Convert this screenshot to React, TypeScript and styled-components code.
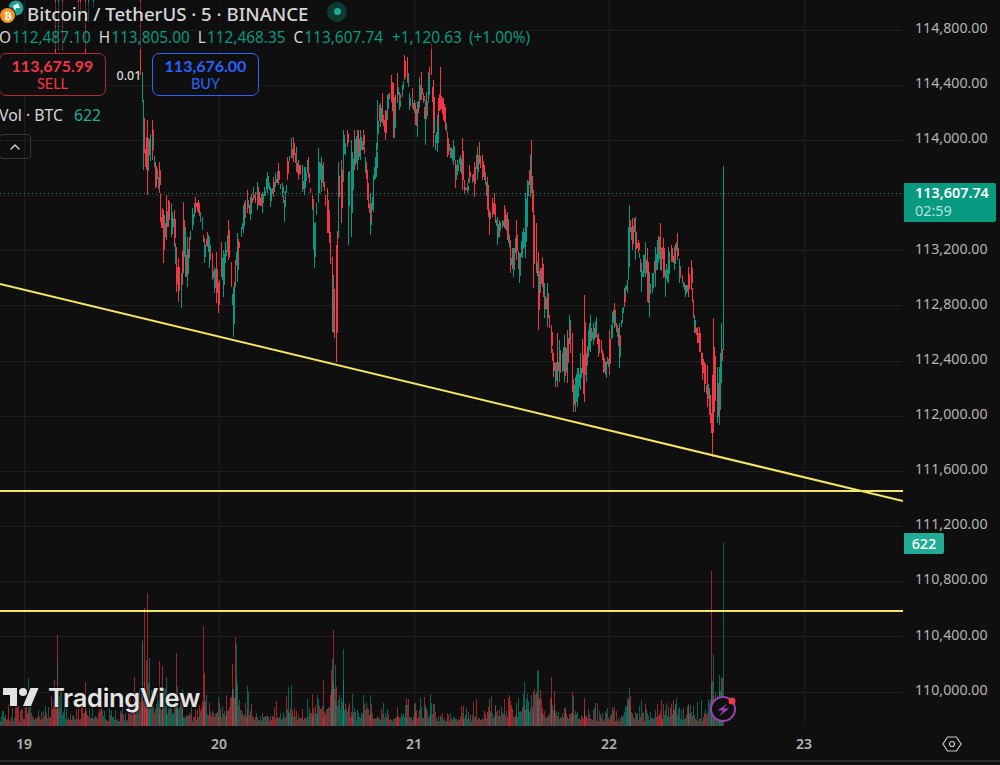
import { ChevronUp } from "lucide-react";
import { FaBtc } from "react-icons/fa";
import styled, { createGlobalStyle } from "styled-components";

const UP = "#089981";
const DOWN = "#f23645";
const FONT = `"Noto Sans", "Open Sans", sans-serif`;

const GlobalStyle = createGlobalStyle`
  html, body {
    margin: 0;
    height: 100%;
    background: #0f0f0f;
  }
  body {
    font-family: ${FONT};
    overflow: hidden;
  }
`;

// [x, top, bottom] read off 3x crops of the chart
type Row = number[];
const fromCrop = (ox: number, oy: number, rows: Row[]) =>
  rows.map(([x, a, b]) => [ox + x / 3, oy + a / 3, oy + b / 3]);

const PRICE_TRACE: Row[] = [
  ...fromCrop(130, 130, [
    [40, -90, 120], [52, -30, 195], [65, -30, 90], [75, 95, 175], [88, 95, 190], [90, 190, 275],
    [100, 240, 400], [108, 195, 330], [115, 210, 290], [122, 220, 320], [132, 240, 350],
    [138, 350, 485], [145, 385, 515], [152, 430, 535], [158, 215, 430], [165, 290, 440],
    [172, 320, 470], [178, 320, 385], [185, 235, 300], [195, 200, 250], [205, 210, 250],
    [215, 260, 300], [222, 325, 400], [230, 305, 350], [238, 320, 415], [245, 370, 450],
    [252, 410, 490], [258, 365, 520], [265, 455, 550], [272, 335, 440], [280, 360, 500],
    [285, 335, 400], [295, 270, 390], [302, 395, 470], [308, 470, 620], [315, 390, 470],
    [322, 310, 455], [332, 290, 320], [340, 225, 310], [350, 180, 250], [360, 200, 270],
    [370, 170, 210], [380, 155, 240], [395, 185, 250], [410, 125, 190], [420, 170, 230],
    [430, 140, 200], [445, 100, 165], [455, 160, 200], [462, 210, 275], [472, 80, 150],
    [482, 25, 85], [490, 20, 95], [498, 50, 125], [505, 90, 150], [515, 105, 185],
    [522, 110, 195], [535, 80, 145], [545, 195, 240], [550, 240, 360], [553, 280, 415],
    [563, 55, 220], [572, 80, 185], [580, 95, 170], [590, 175, 310], [598, 240, 340],
    [605, 380, 605], [610, 440, 610], [617, 345, 695], [625, 95, 270], [632, 90, 280],
    [640, 0, 150], [650, 0, 50], [655, 130, 345], [662, 30, 320], [672, 0, 120],
    [680, 0, 120], [690, 0, 90], [700, 0, 60], [712, 120, 210],
  ]),
  ...fromCrop(370, 40, [
    [0, 460, 585], [10, 405, 515], [18, 310, 410], [22, 180, 330], [30, 190, 260],
    [37, 160, 250], [45, 210, 300], [52, 165, 240], [62, 105, 185], [68, 130, 295],
    [73, 170, 295], [80, 100, 190], [88, 170, 210], [95, 135, 170], [103, 45, 115],
    [110, 50, 130], [118, 160, 210], [125, 145, 205], [135, 190, 255], [142, 185, 290],
    [148, 110, 205], [152, 95, 180], [158, 160, 190], [165, 180, 315], [175, 95, 190],
    [182, 10, 105], [188, 120, 320], [195, 285, 330], [202, 225, 335], [210, 80, 210],
    [218, 175, 240], [225, 200, 270], [232, 275, 350], [240, 325, 355], [248, 300, 375],
    [255, 360, 445], [262, 360, 405], [270, 345, 395], [277, 295, 450], [282, 420, 460],
    [290, 430, 460], [298, 375, 430], [305, 405, 430], [312, 365, 470], [320, 320, 420],
    [328, 305, 370], [335, 345, 420], [342, 375, 420], [350, 410, 510], [358, 510, 585],
    [365, 475, 530], [372, 460, 525], [380, 530, 615], [388, 540, 590], [395, 540, 565],
    [403, 495, 565], [412, 515, 600], [420, 600, 700], [428, 625, 710], [438, 540, 660],
    [446, 640, 730], [455, 575, 655], [465, 460, 655], [472, 420, 560], [480, 345, 470],
    [482, 300, 460],
  ]),
  ...fromCrop(520, 190, [
    [40, 0, 295], [47, 100, 250], [55, 185, 420], [60, 235, 310], [65, 200, 290],
    [72, 280, 385], [80, 280, 410], [85, 310, 380], [92, 405, 490], [98, 490, 560],
    [105, 520, 590], [110, 430, 590], [118, 450, 575], [125, 490, 545], [132, 435, 575],
    [140, 420, 580], [148, 375, 440], [155, 430, 605], [160, 590, 665], [165, 560, 665],
    [172, 535, 650], [180, 490, 600], [192, 315, 635], [198, 490, 575], [205, 420, 500],
    [210, 375, 485], [218, 400, 465], [228, 380, 440], [235, 430, 500], [242, 450, 490],
    [250, 490, 550], [258, 515, 565], [267, 420, 555], [275, 365, 445], [282, 340, 415],
    [290, 405, 440], [297, 400, 535], [305, 355, 400], [312, 295, 350], [320, 270, 310],
    [323, 110, 270], [328, 45, 150], [336, 85, 180], [345, 80, 210], [353, 150, 190],
    [362, 220, 305], [368, 195, 260], [375, 155, 260], [382, 175, 335], [388, 245, 380],
    [395, 250, 310], [405, 170, 290], [412, 150, 240], [420, 100, 240], [428, 145, 265],
    [435, 240, 320], [445, 170, 280], [452, 165, 215], [462, 170, 240], [470, 130, 210],
    [478, 210, 280], [485, 255, 280], [495, 285, 320], [505, 230, 320], [512, 210, 300],
    [518, 330, 385], [522, 375, 430], [530, 410, 460], [537, 410, 485], [545, 490, 570],
    [552, 515, 605], [560, 525, 650], [567, 595, 675], [575, 555, 800], [580, 385, 730],
    [590, 530, 700], [598, 530, 705], [603, 400, 580], [608, 440, 530],
  ]),
];

// wicks poking in behind the legend, above the visible range
const LEFT_WICKS: [number, number, number, boolean][] = [
  [55, 0, 53, false], [58, 0, 50, true], [62, 0, 50, false],
  [78, 0, 10, false], [80, 0, 13, false], [85, 0, 53, false],
  [88, 0, 22, true], [93, 0, 8, true], [140, 0, 75, false], [142, 72, 102, true],
];

// [x, top, up] spikes in the volume pane, again from crops
const volumePeaks = (ox: number, oy: number, rows: Row[]) =>
  rows.map(([x, y, up]) => [ox + x / 3, oy + y / 3, up]);

const VOLUME_PEAKS: Row[] = [
  ...volumePeaks(0, 590, [
    [172, 135, 0], [170, 220, 1], [85, 265, 1], [163, 270, 0], [255, 277, 0],
  ]),
  ...volumePeaks(100, 590, [
    [103, 262, 0], [125, 165, 0], [127, 150, 1], [132, 55, 0], [137, 210, 0], [142, 10, 0],
    [148, 205, 1], [178, 213, 0], [187, 228, 0], [198, 262, 1], [229, 190, 0], [232, 290, 1],
    [245, 298, 1], [310, 108, 0], [312, 248, 0], [355, 320, 1], [379, 315, 0], [396, 222, 0],
    [400, 325, 1], [406, 140, 0], [409, 162, 1], [442, 288, 1], [565, 290, 1], [574, 285, 1],
    [636, 312, 0], [652, 315, 1], [670, 270, 0], [692, 240, 0], [696, 207, 1], [700, 120, 0],
    [706, 225, 1], [728, 270, 1], [730, 177, 1], [757, 312, 1], [789, 315, 1], [810, 315, 1],
    [892, 350, 0],
  ]),
  ...volumePeaks(400, 620, [
    [18, 235, 0], [45, 250, 0], [75, 255, 1], [90, 222, 1], [190, 258, 0], [268, 237, 0],
    [285, 255, 0], [328, 225, 0], [349, 250, 1], [373, 186, 1], [379, 238, 1], [385, 243, 1],
    [400, 217, 0], [412, 153, 1], [415, 150, 1], [422, 240, 0], [453, 170, 0], [463, 213, 0],
    [495, 270, 0], [517, 216, 0], [553, 235, 0], [682, 235, 1], [688, 204, 1], [691, 228, 0],
    [784, 240, 0], [818, 240, 0], [825, 252, 1], [865, 252, 1], [934, -147, 0], [940, 102, 1],
    [958, 165, 1], [963, 170, 1], [970, -231, 1],
  ]),
];

const random = (seed: number) => () => {
  seed = (seed + 0x6d2b79f5) | 0;
  let t = Math.imul(seed ^ (seed >>> 15), 1 | seed);
  t = (t + Math.imul(t ^ (t >>> 7), 61 | t)) ^ t;
  return ((t ^ (t >>> 14)) >>> 0) / 4294967296;
};

type Candle = { x: number; high: number; low: number; up: boolean; thick: boolean };

const buildCandles = (): Candle[] => {
  const rnd = random(19);
  const out: Candle[] = LEFT_WICKS.map(([x, high, low, up]) => ({ x, high, low, up, thick: false }));
  PRICE_TRACE.forEach(([x, top, bottom], i) => {
    const next = PRICE_TRACE[i + 1];
    if (!next) return;
    const mid = (top + bottom) / 2;
    const nextMid = (next[1] + next[2]) / 2;
    const falling = nextMid > mid;
    out.push({ x, high: top, low: bottom, up: rnd() < 0.2 ? falling : !falling, thick: i % 2 === 0 });
    for (let cx = x + 1; cx < next[0] - 0.6; cx += 1) {
      const k = (cx - x) / (next[0] - x);
      const t = top + (next[1] - top) * k;
      const b = bottom + (next[2] - bottom) * k;
      const high = t + rnd() * (b - t) * 0.55;
      out.push({
        x: cx,
        high,
        low: high + (b - high) * (0.35 + rnd() * 0.55),
        up: rnd() < 0.3 ? falling : !falling,
        thick: false,
      });
    }
  });
  out.push({ x: 723, high: 166, low: 350, up: true, thick: false });
  return out;
};

const buildVolume = () => {
  const rnd = random(7);
  const bars: { x: number; top: number; up: boolean }[] = [];
  for (let x = 0; x < 723; x++) {
    let boost = 0;
    VOLUME_PEAKS.forEach(([px, py]) => {
      const dx = x - px;
      boost += (726 - py) * 0.16 * Math.exp(-(dx * dx) / 18);
    });
    const h = 5 + rnd() * rnd() * 26 + Math.min(boost, 40) * (0.4 + rnd() * 0.6);
    bars.push({ x, top: 726 - h, up: rnd() < 0.5 });
  }
  return bars;
};

const CANDLES = buildCandles();
const VOLUME = buildVolume();
const PRICE_LINES = Array.from({ length: 13 }, (_, i) => Math.round(29.7 + i * 55.15));
const TIME_LINES = [24, 219, 414, 609, 804];
const PRICES = [
  "114,800.00", "114,400.00", "114,000.00", "", "113,200.00", "112,800.00", "112,400.00",
  "112,000.00", "111,600.00", "111,200.00", "110,800.00", "110,400.00", "110,000.00",
];
const DAYS = ["19", "20", "21", "22", "23"];

const Page = styled.div`
  display: grid;
  grid-template-columns: 903px 97px;
  grid-template-rows: 727px 33px 2px;
  width: 1000px;
  height: 765px;
  background: #0f0f0f;
  overflow: hidden;
`;

const ChartPane = styled.div`
  position: relative;
  overflow: hidden;
`;

const ChartCanvas = styled.svg`
  display: block;
`;

const Legend = styled.div`
  position: absolute;
  top: 0;
  left: -1px;
  display: flex;
  flex-direction: column;
  align-items: flex-start;
`;

const TitleRow = styled.div`
  display: flex;
  align-items: center;
  height: 26px;
  margin-left: 1px;
  margin-top: 1px;
`;

const CoinStack = styled.div`
  position: relative;
  width: 26px;
  height: 26px;
  flex-shrink: 0;
`;

const BtcCoin = styled.div`
  position: absolute;
  left: 0;
  top: 7px;
  width: 15px;
  height: 15px;
  border-radius: 50%;
  background: #f7931a;
  color: #fff;
  display: flex;
  align-items: center;
  justify-content: center;
  font-size: 10px;
  box-shadow: 0 0 0 1px #0f0f0f;
`;

const TetherCoin = styled.svg`
  position: absolute;
  left: 8px;
  top: -1px;
`;

const Title = styled.div`
  color: #d6d6d6;
  font-size: 18.6px;
  font-weight: 500;
  line-height: 24px;
  background: rgba(15, 15, 15, 0.55);
  margin-left: 1px;
`;

const LiveDot = styled.span`
  width: 20px;
  height: 20px;
  margin-left: 19px;
  margin-top: -5px;
  border-radius: 50%;
  background: #0d3b34;
  display: flex;
  align-items: center;
  justify-content: center;
  &::after {
    content: "";
    width: 7px;
    height: 7px;
    border-radius: 50%;
    background: #22ab94;
  }
`;

const OhlcRow = styled.div`
  display: flex;
  height: 22px;
  font-size: 15.4px;
  line-height: 22px;
  background: rgba(15, 15, 15, 0.55);
`;

const OhlcLabel = styled.span<{ $first?: boolean }>`
  color: #d6d6d6;
  margin-left: ${(p) => (p.$first ? 0 : 8)}px;
  margin-right: 1px;
`;

const OhlcValue = styled.span<{ $gap?: number }>`
  color: ${UP};
  margin-left: ${(p) => p.$gap ?? 0}px;
`;

const TradeRow = styled.div`
  display: flex;
  align-items: center;
  margin-top: 4px;
`;

const TradeButton = styled.div<{ $border: string; $label: string; $value: string }>`
  width: 107px;
  height: 43px;
  box-sizing: border-box;
  border: 1px solid ${(p) => p.$border};
  border-radius: 7px;
  background: #0f0f0f;
  display: flex;
  flex-direction: column;
  align-items: center;
  justify-content: center;
  color: ${(p) => p.$value};
  font-family: Lato, ${FONT};
  font-size: 16px;
  line-height: 18px;
  font-weight: 700;
  span {
    color: ${(p) => p.$label};
    font-weight: 400;
    font-size: 14.5px;
    line-height: 17px;
  }
`;

const Quantity = styled.div`
  width: 46px;
  text-align: center;
  color: #d6d6d6;
  font-size: 12.5px;
  font-weight: 500;
  margin-top: 1px;
`;

const VolumeRow = styled.div`
  display: flex;
  gap: 11px;
  margin-top: 8px;
  height: 22px;
  line-height: 22px;
  font-size: 15.8px;
  color: #d6d6d6;
  span {
    color: #22ab94;
  }
`;

const CollapseButton = styled.div`
  width: 32px;
  height: 25px;
  margin-top: 8px;
  box-sizing: border-box;
  border: 1px solid #3a3a3a;
  border-radius: 4px;
  color: #d6d6d6;
  display: flex;
  align-items: center;
  justify-content: center;
`;

const Watermark = styled.div`
  position: absolute;
  left: 3px;
  top: 683px;
  display: flex;
  align-items: center;
  gap: 9px;
  color: #e3e3e3;
  svg {
    fill: #e3e3e3;
    stroke: #0f0f0f;
    stroke-width: 2.5px;
    paint-order: stroke;
  }
`;

const WatermarkText = styled.span`
  font-family: Inter, sans-serif;
  font-weight: 600;
  font-size: 25.5px;
  letter-spacing: -0.3px;
  line-height: 30px;
  text-shadow: 0 0 3px #0f0f0f, 0 0 3px #0f0f0f, 0 0 2px #0f0f0f;
`;

const BoltBadge = styled.svg`
  position: absolute;
  left: 708px;
  top: 694px;
`;

const PriceScale = styled.div`
  position: relative;
  display: grid;
  grid-template-rows: repeat(13, 55.15px);
  padding-top: 0;
  padding-left: 12px;
  align-items: center;
  color: #b4b4b4;
  font-size: 14.2px;
  overflow: hidden;
`;

const PriceBadge = styled.div`
  position: absolute;
  left: 1px;
  top: 183px;
  width: 92px;
  height: 39px;
  box-sizing: border-box;
  padding: 1px 0 0 11px;
  background: ${UP};
  border-radius: 0 2px 2px 0;
  color: #fff;
  font-size: 14.4px;
  font-weight: 600;
  line-height: 18px;
  span {
    display: block;
    font-weight: 400;
    color: rgba(255, 255, 255, 0.72);
  }
`;

const VolumeBadge = styled.div`
  position: absolute;
  left: 1px;
  top: 533px;
  width: 40px;
  height: 21px;
  background: #22ab94;
  border-radius: 0 2px 2px 0;
  color: #fff;
  font-size: 14.4px;
  font-weight: 500;
  line-height: 21px;
  text-align: center;
`;

const TimeAxis = styled.div`
  display: flex;
  gap: 147px;
  align-items: center;
  color: #b4b4b4;
  font-size: 14px;
  font-weight: 600;
`;

const DayTick = styled.span`
  width: 48px;
  text-align: center;
`;

const AxisCorner = styled.div`
  display: flex;
  align-items: center;
  justify-content: center;
  padding-left: 1px;
  color: #c8c8c8;
`;

const BottomRule = styled.div`
  grid-column: 1 / -1;
  background: #2a2a2a;
`;

const App = () => (
  <Page>
    <GlobalStyle />
    <ChartPane>
      <ChartCanvas width={903} height={727} viewBox="0 0 903 727">
        <g stroke="#1e1e1e" strokeWidth={1} shapeRendering="crispEdges">
          {PRICE_LINES.map((y) => (
            <line key={y} x1={0} x2={903} y1={y + 0.5} y2={y + 0.5} />
          ))}
          {TIME_LINES.map((x) => (
            <line key={x} x1={x + 0.5} x2={x + 0.5} y1={0} y2={726} />
          ))}
        </g>
        <g shapeRendering="crispEdges">
          {VOLUME.map((b) => (
            <rect
              key={b.x}
              x={b.x}
              y={b.top}
              width={1}
              height={726 - b.top}
              fill={b.up ? UP : DOWN}
              fillOpacity={0.6}
            />
          ))}
          {VOLUME_PEAKS.map(([x, y, up]) => (
            <rect
              key={`${x}-${y}`}
              x={Math.round(x)}
              y={y}
              width={1}
              height={726 - y}
              fill={up ? UP : DOWN}
              fillOpacity={0.6}
            />
          ))}
        </g>
        <line x1={0} x2={903} y1={193.5} y2={193.5} stroke={UP} strokeDasharray="1 3" />
        <g shapeRendering="crispEdges">
          {CANDLES.map((c, i) => {
            const span = c.low - c.high;
            return (
              <g key={i} fill={c.up ? UP : DOWN}>
                <rect x={Math.round(c.x)} y={c.high} width={1} height={span} />
                {c.thick && (
                  <rect x={Math.round(c.x)} y={c.high + span * 0.25} width={2} height={span * 0.5} />
                )}
              </g>
            );
          })}
        </g>
        <g stroke="#f5e663" strokeWidth={2}>
          <line x1={0} y1={284} x2={903} y2={501} />
          <line x1={0} y1={491} x2={903} y2={491} />
          <line x1={0} y1={611} x2={903} y2={611} />
        </g>
      </ChartCanvas>

      <Legend>
        <TitleRow>
          <CoinStack>
            <TetherCoin width={16} height={16} viewBox="0 0 16 16">
              <circle cx={8} cy={8} r={7.5} fill="#1f9f98" />
              <path d="M5 6 L10 3 L12 8 L8 8 L7 11 Z" fill="#e8f5f4" />
            </TetherCoin>
            <BtcCoin>
              <FaBtc />
            </BtcCoin>
          </CoinStack>
          <Title>Bitcoin / TetherUS · 5 · BINANCE</Title>
          <LiveDot />
        </TitleRow>
        <OhlcRow>
          <OhlcLabel $first>O</OhlcLabel>
          <OhlcValue>112,487.10</OhlcValue>
          <OhlcLabel>H</OhlcLabel>
          <OhlcValue>113,805.00</OhlcValue>
          <OhlcLabel>L</OhlcLabel>
          <OhlcValue>112,468.35</OhlcValue>
          <OhlcLabel>C</OhlcLabel>
          <OhlcValue>113,607.74</OhlcValue>
          <OhlcValue $gap={9}>+1,120.63</OhlcValue>
          <OhlcValue $gap={7}>(+1.00%)</OhlcValue>
        </OhlcRow>
        <TradeRow>
          <TradeButton $border="#b22833" $label={DOWN} $value={DOWN}>
            113,675.99
            <span>SELL</span>
          </TradeButton>
          <Quantity>0.01</Quantity>
          <TradeButton $border="#2962ff" $label="#2962ff" $value="#2962ff">
            113,676.00
            <span>BUY</span>
          </TradeButton>
        </TradeRow>
        <VolumeRow>
          Vol · BTC
          <span>622</span>
        </VolumeRow>
        <CollapseButton>
          <ChevronUp size={16} strokeWidth={2} />
        </CollapseButton>
      </Legend>

      <Watermark>
        <svg width={36} height={28} viewBox="0 0 36 28">
          <path d="M14 22H7V11H0V4h14v18zM28 22h-8l7.5-18h8L28 22z" />
          <circle cx={20} cy={8} r={4} />
        </svg>
        <WatermarkText>TradingView</WatermarkText>
      </Watermark>

      <BoltBadge width={32} height={30} viewBox="0 0 32 30">
        <circle cx={15} cy={15} r={12} fill="#0f0f0f" stroke="#9c3fb0" strokeWidth={2} />
        <path d="M19.5 9.5 L9.5 16.5 H15 L11 22.5 L21 14.5 H15.5 Z" fill="#9c3fb0" />
        <circle cx={24} cy={7} r={3.5} fill={DOWN} />
      </BoltBadge>
    </ChartPane>

    <PriceScale>
      {PRICES.map((p, i) => (
        <div key={i}>{p}</div>
      ))}
      <PriceBadge>
        113,607.74
        <span>02:59</span>
      </PriceBadge>
      <VolumeBadge>622</VolumeBadge>
    </PriceScale>

    <TimeAxis>
      {DAYS.map((d) => (
        <DayTick key={d}>{d}</DayTick>
      ))}
    </TimeAxis>
    <AxisCorner>
      <svg width={20} height={20} viewBox="0 0 20 20" fill="none" stroke="currentColor">
        <path d="M5.5 3 H14.5 L19 10 L14.5 17 H5.5 L1 10 Z" strokeWidth={1.2} />
        <circle cx={10} cy={10} r={2.5} strokeWidth={1.2} />
      </svg>
    </AxisCorner>
    <BottomRule />
  </Page>
);

export default App;
